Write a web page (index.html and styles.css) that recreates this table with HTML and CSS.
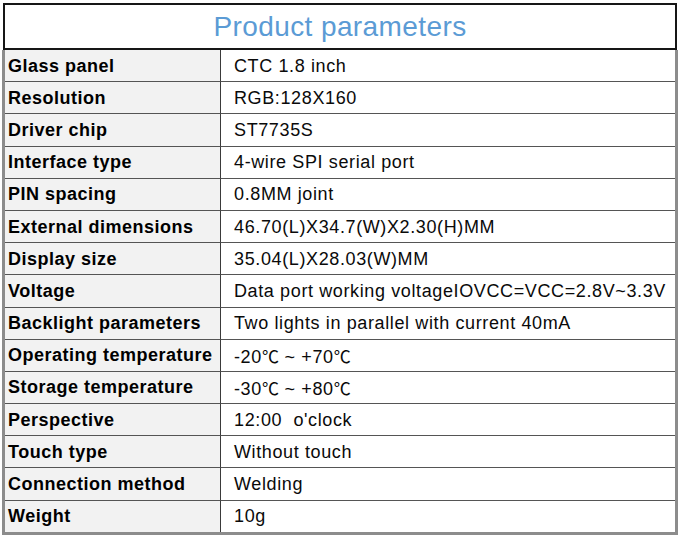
FILE: index.html
```html
<!DOCTYPE html>
<html lang="en">
<head>
<meta charset="utf-8">
<title>Product parameters</title>
<link rel="stylesheet" href="styles.css">
</head>
<body>
<div class="page">
  <div class="title">Product parameters</div>
  <table class="params">
    <tbody>
      <tr><th>Glass panel</th><td>CTC 1.8 inch</td></tr>
      <tr><th>Resolution</th><td>RGB:128X160</td></tr>
      <tr><th>Driver chip</th><td>ST7735S</td></tr>
      <tr><th>Interface type</th><td>4-wire SPI serial port</td></tr>
      <tr><th>PIN spacing</th><td>0.8MM joint</td></tr>
      <tr><th>External dimensions</th><td>46.70(L)X34.7(W)X2.30(H)MM</td></tr>
      <tr><th>Display size</th><td>35.04(L)X28.03(W)MM</td></tr>
      <tr><th>Voltage</th><td>Data port working voltageIOVCC=VCC=2.8V~3.3V</td></tr>
      <tr><th>Backlight parameters</th><td>Two lights in parallel with current 40mA</td></tr>
      <tr><th>Operating temperature</th><td>-20<span class="deg">℃</span> ~ +70<span class="deg">℃</span></td></tr>
      <tr><th>Storage temperature</th><td>-30<span class="deg">℃</span> ~ +80<span class="deg">℃</span></td></tr>
      <tr><th>Perspective</th><td>12:00&nbsp; o'clock</td></tr>
      <tr><th>Touch type</th><td>Without touch</td></tr>
      <tr><th>Connection method</th><td>Welding</td></tr>
      <tr><th>Weight</th><td>10g</td></tr>
    </tbody>
  </table>
</div>
</body>
</html>
```
FILE: styles.css
```css
html, body {
  margin: 0;
  padding: 0;
  background: #ffffff;
}

.page {
  width: 676px;
  padding: 3px 0 0 2px;
  font-family: "Liberation Sans", Arial, sans-serif;
}

.title {
  margin: 0 1px 0 1px;
  height: 43px;
  line-height: 44px;
  border: 2px solid #161616;
  text-align: center;
  font-size: 28px;
  letter-spacing: 0.4px;
  color: #5b9bd5;
  background: #ffffff;
}

.params {
  width: 676px;
  border-collapse: separate;
  border-spacing: 0;
  border-left: 3px solid #8c8c8c;
  border-right: 3px solid #8c8c8c;
  border-bottom: 3px solid #8c8c8c;
  table-layout: fixed;
}

.params th,
.params td {
  height: 30.2px;
  padding: 1px 0 0 0;
  border-bottom: 1px solid #555555;
  font-size: 18px;
  letter-spacing: 0.62px;
  white-space: nowrap;
  vertical-align: middle;
}

.params tr:last-child th,
.params tr:last-child td {
  border-bottom: none;
}

.params th {
  width: 212px;
  padding-left: 3px;
  text-align: left;
  font-weight: bold;
  color: #000000;
  background: #f2f2f2;
  border-right: 1px solid #3a3a3a;
  letter-spacing: 0.5px;
}

.params td {
  padding-left: 13px;
  color: #0a0a0a;
  background: #ffffff;
}

.deg {
  font-family: "Noto Sans CJK SC", "DejaVu Sans", sans-serif;
  font-size: 17px;
  letter-spacing: 0;
}
```
